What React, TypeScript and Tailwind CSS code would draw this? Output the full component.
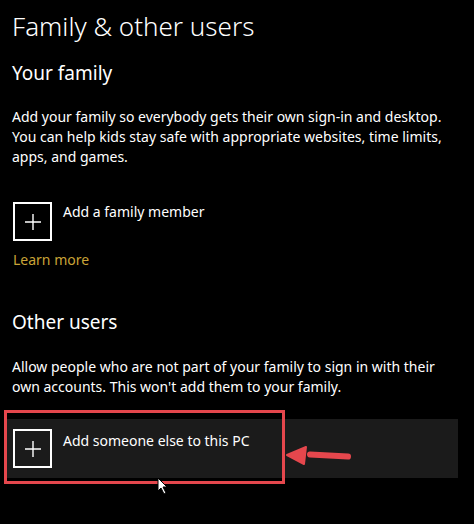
import React from "react";

function PlusBox() {
  return (
    <div className="w-[39px] h-[39px] border-2 border-white flex items-center justify-center shrink-0">
      <svg width="18" height="18" viewBox="0 0 18 18">
        <path d="M9 1v16M1 9h16" stroke="white" strokeWidth="1.4" />
      </svg>
    </div>
  );
}

export default function App() {
  return (
    <div
      className="w-[474px] h-[524px] bg-black text-white overflow-hidden relative"
      style={{ fontFamily: '"Noto Sans", "Open Sans", sans-serif' }}
    >
      <div className="pl-[12px] pt-[8px]">
        <h1 className="text-[26px] font-light leading-[36px]">Family &amp; other users</h1>
        <h2 className="text-[19px] leading-[26px] mt-[16px]">Your family</h2>
        <p className="text-[14px] leading-[20px] mt-[21px] w-[440px]">
          Add your family so everybody gets their own sign-in and desktop. You can help kids stay safe with appropriate websites, time limits, apps, and games.
        </p>
        <div className="flex items-start gap-[11px] mt-[35px] pl-[1px]">
          <PlusBox />
          <span className="text-[14px] leading-[20px]">Add a family member</span>
        </div>
        <div className="text-[14px] leading-[20px] mt-[9px] pl-[1px] text-[#c9a437]">Learn more</div>
        <h2 className="text-[19px] leading-[26px] mt-[39px]">Other users</h2>
        <p className="text-[14px] leading-[20px] mt-[22px] w-[440px]">
          Allow people who are not part of your family to sign in with their own accounts. This won't add them to your family.
        </p>
      </div>
      <div className="relative mt-[22px] ml-[6px] w-[452px] h-[59px] bg-[#1b1b1b]">
        <div className="flex items-start gap-[11px] pt-[10px] pl-[7px]">
          <PlusBox />
          <span className="text-[14px] leading-[20px] mt-[2px]">Add someone else to this PC</span>
        </div>
        <div className="absolute left-[-2px] top-[-9px] w-[281px] h-[74px] border-[3px] border-[#e5474d]" />
        <svg className="absolute left-[278px] top-[26px]" width="70" height="24" viewBox="0 0 70 24">
          <path d="M26 9.5 L64 11.5" stroke="#e5474d" strokeWidth="6" strokeLinecap="round" />
          <path d="M3 10 L22 2 L20 19 Z" fill="#e5474d" stroke="#e5474d" strokeWidth="2" strokeLinejoin="round" />
        </svg>
        <svg className="absolute left-[151px] top-[58px]" width="12" height="18" viewBox="0 0 12 18">
          <path d="M1 1 L1 14 L4 11 L7 17 L9 16 L6 10 L10 10 Z" fill="white" stroke="black" strokeWidth="1" />
        </svg>
      </div>
    </div>
  );
}
